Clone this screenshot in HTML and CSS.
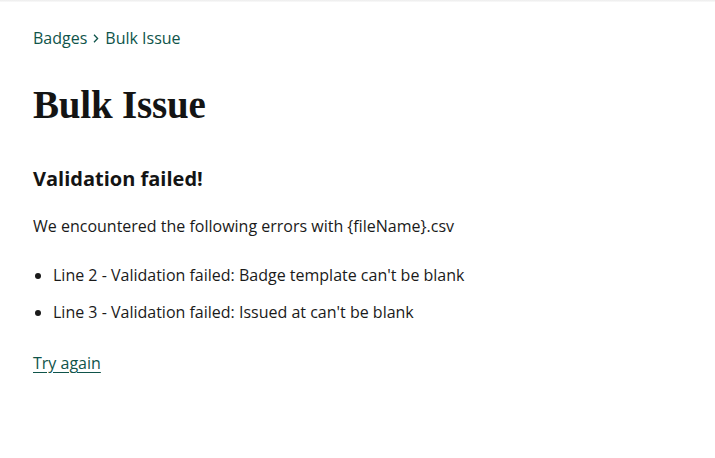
FILE: index.html
```html
<!DOCTYPE html>
<html lang="en">
<head>
<meta charset="utf-8">
<title>Bulk Issue</title>
<link rel="stylesheet" href="styles.css">
</head>
<body>
<div class="topbar"></div>
<main class="page">
  <nav class="breadcrumb">
    <a href="#" class="crumb">Badges</a>
    <svg class="sep" width="6" height="9" viewBox="0 0 6 9" aria-hidden="true"><path d="M1 0.8 L4.6 4.5 L1 8.2" fill="none" stroke="#0f544a" stroke-width="1.3"/></svg>
    <span class="crumb">Bulk Issue</span>
  </nav>
  <h1 class="title">Bulk Issue</h1>
  <h2 class="subtitle">Validation failed!</h2>
  <p class="intro">We encountered the following errors with {fileName}.csv</p>
  <ul class="errors">
    <li>Line 2 - Validation failed: Badge template can't be blank</li>
    <li>Line 3 - Validation failed: Issued at can't be blank</li>
  </ul>
  <a href="#" class="retry">Try again</a>
</main>
</body>
</html>
```

FILE: styles.css
```css
html, body {
  margin: 0;
  padding: 0;
  background: #ffffff;
}
body {
  font-family: "Open Sans", "Liberation Sans", sans-serif;
  color: #1a1a1a;
  font-size: 16px;
}
.topbar {
  height: 2px;
  background: linear-gradient(#ececec, #fafafa);
}
.page {
  padding: 0 33px;
  display: flex;
  flex-direction: column;
  align-items: flex-start;
}
.breadcrumb {
  margin-top: 25px;
  display: flex;
  align-items: center;
  gap: 6px;
  line-height: 22px;
  color: #0f544a;
}
.crumb {
  color: #0f544a;
  text-decoration: none;
}
.sep {
  display: block;
  margin-top: 1px;
}
.title {
  font-family: "Liberation Serif", "Times New Roman", serif;
  font-weight: 700;
  font-size: 39px;
  line-height: 44px;
  margin: 34px 0 0;
  color: #141414;
  letter-spacing: -0.2px;
}
.subtitle {
  font-size: 20px;
  font-weight: 700;
  line-height: 28px;
  margin: 38px 0 0;
  color: #141414;
}
.intro {
  margin: 21px 0 0;
  line-height: 24px;
}
.errors {
  margin: 25px 0 0;
  padding-left: 20px;
  line-height: 24px;
}
.errors li {
  margin-bottom: 13px;
}
.retry {
  margin-top: 14px;
  color: #0f544a;
  line-height: 24px;
  text-underline-offset: 3px;
}
```
